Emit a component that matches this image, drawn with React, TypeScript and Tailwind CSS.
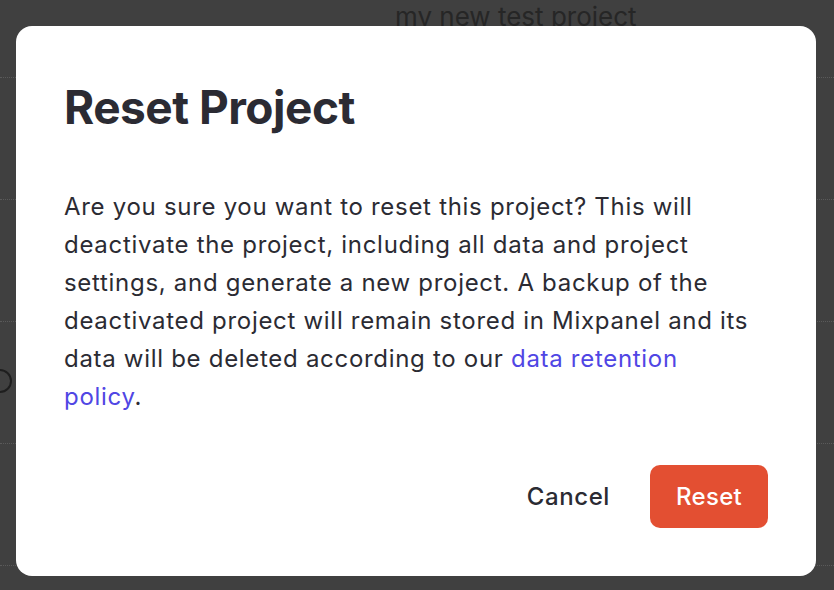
export default function App() {
  const rows = [0, 1, 2, 3, 4];
  return (
    <div className="relative h-[590px] w-[834px] overflow-hidden bg-[#404040] font-['Inter','Noto_Sans',sans-serif]">
      {/* page behind the overlay */}
      <div className="absolute inset-0">
        <div className="pl-[395px] pt-[0px] text-[26px] leading-[34px] text-[#262626]">my new test project</div>
        <div className="flex flex-col pt-[43px]">
          {rows.map((r) => (
            <div key={r} className="h-[122px] border-t border-dotted border-[#5a5a5a]" />
          ))}
        </div>
        <div className="absolute left-[-12px] top-[369px] h-[24px] w-[24px] rounded-full border-2 border-[#1e1e1e]" />
      </div>

      {/* dialog */}
      <div className="absolute left-[16px] top-[26px] flex h-[550px] w-[800px] flex-col rounded-[16px] bg-white px-[48px] pb-[48px] pt-[53px] text-[#2b2b33]">
        <h2 className="text-[46px] font-bold leading-[56px] tracking-[-0.5px]">Reset Project</h2>
        <p className="mt-[53px] w-[730px] whitespace-nowrap text-[24px] leading-[38px] tracking-[0.7px]">
          Are you sure you want to reset this project? This will
          <br />
          deactivate the project, including all data and project
          <br />
          settings, and generate a new project. A backup of the
          <br />
          deactivated project will remain stored in Mixpanel and its
          <br />
          data will be deleted according to our <span className="text-[#5046e4]">data retention</span>
          <br />
          <span className="text-[#5046e4]">policy</span>.
        </p>
        <div className="mt-auto flex items-center justify-end gap-[16px]">
          <button className="h-[63px] px-[24px] text-[24px] font-medium tracking-[0.6px] text-[#2b2b33]">Cancel</button>
          <button className="h-[63px] w-[118px] rounded-[10px] bg-[#e34f32] text-[24px] font-medium tracking-[0.3px] text-white">Reset</button>
        </div>
      </div>
    </div>
  );
}
